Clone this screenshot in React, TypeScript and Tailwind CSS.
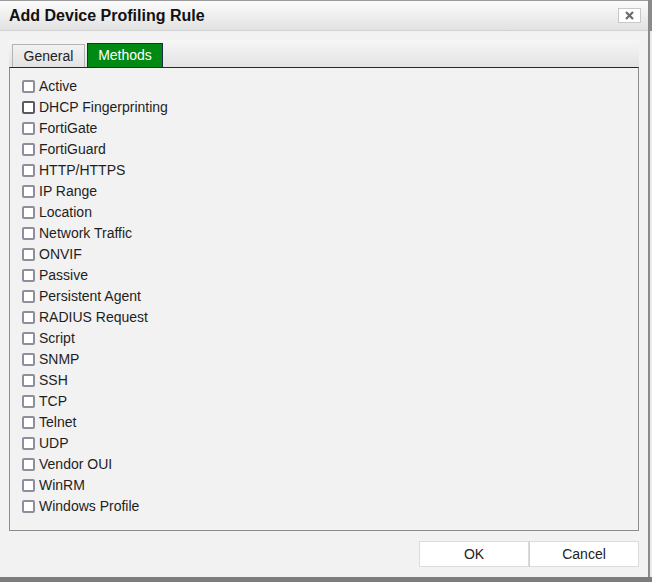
const methods = [
  "Active",
  "DHCP Fingerprinting",
  "FortiGate",
  "FortiGuard",
  "HTTP/HTTPS",
  "IP Range",
  "Location",
  "Network Traffic",
  "ONVIF",
  "Passive",
  "Persistent Agent",
  "RADIUS Request",
  "Script",
  "SNMP",
  "SSH",
  "TCP",
  "Telnet",
  "UDP",
  "Vendor OUI",
  "WinRM",
  "Windows Profile",
];

function Checkbox({ dark }: { dark?: boolean }) {
  return (
    <span
      className={`w-[13px] h-[13px] rounded-[2px] bg-white border-2 ${
        dark ? "border-[#5a5a66]" : "border-[#8e8e9c]"
      }`}
    />
  );
}

export default function App() {
  return (
    <div
      className="w-[652px] h-[582px] bg-[#7d7d7d] flex flex-col text-[#1e1e1e]"
      style={{ fontFamily: '"Liberation Sans", Arial, sans-serif' }}
    >
      <div className="flex h-[577px]">
        <div className="w-[648px] flex flex-col bg-[#f2f2f2] border-t border-[#9a9a9a]">
          {/* title bar */}
          <div className="h-[30px] flex items-center justify-between pl-[9px] pr-[7px] bg-gradient-to-b from-[#fbfbfb] to-[#e2e2e2] border-b border-[#d2d2d2]">
            <span className="text-[16px] font-bold text-[#111]">Add Device Profiling Rule</span>
            <button className="w-[23px] h-[15px] bg-white border border-[#c8c8c8] flex items-center justify-center">
              <svg width="11" height="11" viewBox="0 0 11 11">
                <path d="M2 2 L9 9 M9 2 L2 9" stroke="#6b6b6b" strokeWidth="2.2" />
              </svg>
            </button>
          </div>

          {/* tabs */}
          <div className="pl-[9px] pr-[9px] pt-[9px]">
            <div className="h-[27px] flex items-end pl-[3px] gap-[2px] bg-gradient-to-b from-[#f6f6f6] to-[#e3e3e3]">
              <div className="w-[73px] h-[23px] flex items-center justify-center bg-gradient-to-b from-[#f2f2f2] to-[#e2e2e2] border border-b-0 border-[#b4b4b4] text-[14px] text-[#222]">
                General
              </div>
              <div className="w-[76px] h-[24px] flex items-center justify-center bg-[#008a14] border border-b-0 border-[#1f2a48] text-[14px] text-white">
                Methods
              </div>
            </div>
            <div className="h-[464px] border border-[#8c8c8c] border-t-[#1c2648] pt-[8px] pl-[12px]">
              {methods.map((m, i) => (
                <label key={m} className="h-[21px] flex items-center gap-[4px] text-[14px]">
                  <Checkbox dark={i === 1} />
                  <span>{m}</span>
                </label>
              ))}
            </div>
          </div>

          {/* footer */}
          <div className="flex justify-end pr-[9px] pt-[10px]">
            <button className="w-[110px] h-[26px] bg-white border border-[#dcdcdc] text-[14px] text-[#222]">OK</button>
            <button className="w-[110px] h-[26px] bg-white border border-[#dcdcdc] border-l-[#cfcfcf] text-[14px] text-[#222]">
              Cancel
            </button>
          </div>
        </div>
        <div className="w-[4px] bg-[#8a8a8a] flex flex-col">
          <div className="h-[31px] bg-[#8a8a8a]" />
          <div className="flex-1 ml-[2px] bg-[#ececec]" />
        </div>
      </div>
    </div>
  );
}
